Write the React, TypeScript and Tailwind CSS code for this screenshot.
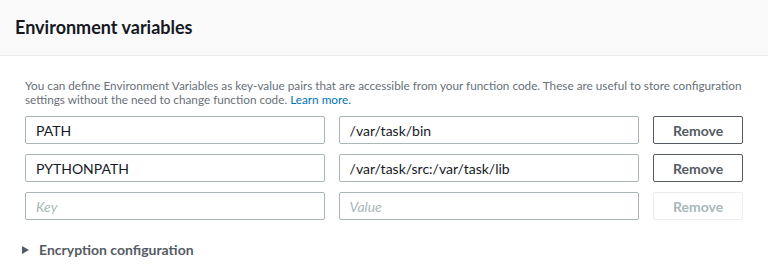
export default function App() {
  const font = { fontFamily: 'Lato, "Open Sans", "Liberation Sans", sans-serif' };
  const rows = [
    { k: "PATH", v: "/var/task/bin" },
    { k: "PYTHONPATH", v: "/var/task/src:/var/task/lib" },
  ];
  return (
    <div className="w-[768px] h-[280px] bg-white overflow-hidden" style={font}>
      <div className="h-[56px] bg-[#fafafa] border-b border-[#eaeded] flex items-center px-[15px]">
        <h2 className="text-[18px] font-bold text-[#16191f]">Environment variables</h2>
      </div>
      <div className="px-[25px] pt-[23px]">
        <p className="text-[11.75px] leading-[14px] text-[#687078] whitespace-nowrap">
          You can define Environment Variables as key-value pairs that are accessible from your function code. These are useful to store configuration
          <br />
          settings without the need to change function code.{" "}
          <span className="text-[#0073bb]">Learn more.</span>
        </p>
        <div className="mt-[9px] flex flex-col gap-[10px]">
          {rows.map((r) => (
            <div key={r.k} className="flex items-center gap-[14px]">
              <div className="w-[300px] h-[28px] border border-[#aab7b8] rounded-[2px] flex items-center px-[10px] text-[14px] text-[#16191f]">{r.k}</div>
              <div className="w-[301px] h-[28px] border border-[#aab7b8] rounded-[2px] flex items-center px-[10px] text-[14px] text-[#16191f]">{r.v}</div>
              <div className="w-[90px] h-[28px] border border-[#545b64] rounded-[2px] flex items-center justify-center text-[14px] font-bold text-[#545b64]">Remove</div>
            </div>
          ))}
          <div className="flex items-center gap-[14px]">
            <div className="w-[300px] h-[28px] border border-[#aab7b8] rounded-[2px] flex items-center px-[10px] text-[14px] italic text-[#aab7b8]">Key</div>
            <div className="w-[301px] h-[28px] border border-[#aab7b8] rounded-[2px] flex items-center px-[10px] text-[14px] italic text-[#aab7b8]">Value</div>
            <div className="w-[90px] h-[28px] border border-[#eaeded] rounded-[2px] flex items-center justify-center text-[14px] font-bold text-[#aab7b8]">Remove</div>
          </div>
        </div>
        <div className="mt-[19px] flex items-center ml-[-4px]">
          <svg width="9" height="10" viewBox="0 0 9 10" className="mr-[9px]">
            <path d="M1 1 L8 5 L1 9 Z" fill="#545b64" />
          </svg>
          <span className="text-[14px] font-bold text-[#545b64]">Encryption configuration</span>
        </div>
      </div>
    </div>
  );
}
